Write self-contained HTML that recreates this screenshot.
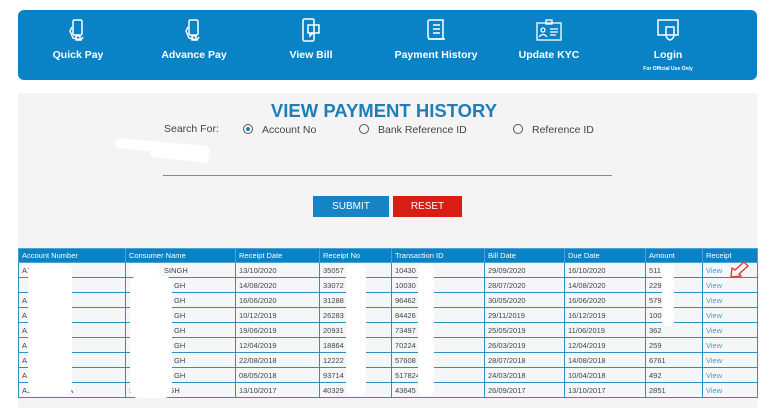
<!DOCTYPE html>
<html><head><meta charset="utf-8"><style>
*{margin:0;padding:0;box-sizing:border-box}
body{width:768px;height:408px;background:#fff;font-family:"Liberation Sans",sans-serif;position:relative;overflow:hidden}
.bar{position:absolute;left:18px;top:10px;width:739px;height:70px;background:#0a83c6;border-radius:6px}
.it{position:absolute;top:0;width:120px;text-align:center;color:#fff}
.it svg{position:absolute;top:8px;left:50%;margin-left:-11px}
.it b{position:absolute;top:39px;left:0;right:0;font-size:10.5px;font-weight:bold}
.it i{position:absolute;top:56px;left:0;right:0;font-size:5px;font-style:normal;font-weight:bold}
.panel{position:absolute;left:18px;top:93px;width:739px;height:315px;background:#f4f4f5}
.title{position:absolute;left:0;width:768px;top:100px;text-align:center;color:#1e7fb8;font-size:18.5px;font-weight:bold}
.t{position:absolute;font-size:10.5px;color:#444}
.rad{position:absolute;width:10px;height:10px;border:1.2px solid #555;border-radius:50%}
.line{position:absolute;left:163px;top:175px;width:449px;height:1px;background:#888}
.btn{position:absolute;top:196px;height:21px;color:#fff;font-size:10px;text-align:center;line-height:21px}
table{position:absolute;left:18px;top:248px;border-collapse:collapse;font-size:7.5px;color:#444}
td,th{border:1px solid #2f8fc4;height:15px;padding:0 3px;text-align:left;font-weight:normal;white-space:nowrap}
th{background:#0a83c6;color:#fff;height:14px;border-color:#4aa3d4}
td{background:#f4f6f8}
td.v{color:#4a9bcc}
td.n{padding-left:48px}
.w{position:absolute;background:#fff}
</style></head><body>
<div class="bar">
<div class="it" style="left:0"><svg width="22" height="26" viewBox="0 0 22 26" fill="none" stroke="#fff" stroke-width="1.5"><rect x="6" y="2" width="9" height="15" rx="1.5"/><path d="M5 9 L3 13 L6 20 L14 22 L16 19"/><rect x="9" y="18" width="4" height="4"/></svg><b>Quick Pay</b></div>
<div class="it" style="left:116px"><svg width="22" height="26" viewBox="0 0 22 26" fill="none" stroke="#fff" stroke-width="1.5"><rect x="6" y="2" width="9" height="15" rx="1.5"/><path d="M5 9 L3 13 L6 20 L14 22 L16 19"/><rect x="9" y="18" width="4" height="4"/></svg><b>Advance Pay</b></div>
<div class="it" style="left:233px"><svg width="22" height="26" viewBox="0 0 22 26" fill="none" stroke="#fff" stroke-width="1.5"><rect x="3" y="1" width="11" height="22" rx="1.5"/><rect x="8" y="7" width="11" height="8"/><path d="M10 15 L10 18 L13 15"/></svg><b>View Bill</b></div>
<div class="it" style="left:358px"><svg width="22" height="26" viewBox="0 0 22 26" fill="none" stroke="#fff" stroke-width="1.5"><path d="M4 2 H18 V21 H6 Q3 21 3 18 V4 Q3 2 5 2"/><path d="M8 7 H15 M8 11 H15 M8 15 H15"/><path d="M3 21 H20"/></svg><b>Payment History</b></div>
<div class="it" style="left:471px"><svg width="26" height="24" viewBox="0 0 26 24" fill="none" stroke="#fff" stroke-width="1.3" style="margin-left:-13px"><rect x="1" y="5" width="24" height="17"/><rect x="10" y="2" width="6" height="4"/><circle cx="7" cy="12" r="2"/><path d="M3 19 Q7 14 11 19"/><path d="M14 11 H22 M14 14 H22 M14 17 H20"/></svg><b>Update KYC</b></div>
<div class="it" style="left:590px"><svg width="24" height="24" viewBox="0 0 24 24" fill="none" stroke="#fff" stroke-width="1.5" style="margin-left:-12px"><rect x="2" y="2" width="20" height="15"/><path d="M10 9 H18 V16 Q18 21 14 22 Q10 21 10 16 Z"/></svg><b>Login</b><i>For Official Use Only</i></div>
</div>
<div class="panel"></div>
<div class="title">VIEW PAYMENT HISTORY</div>
<div class="t" style="left:164px;top:123px">Search For:</div>
<div class="rad" style="left:243px;top:124px"></div><div style="position:absolute;left:246px;top:127px;width:4px;height:4px;border-radius:50%;background:#1e7fb8"></div>
<div class="t" style="left:262px;top:124px">Account No</div>
<div class="rad" style="left:359px;top:124px"></div>
<div class="t" style="left:378px;top:124px">Bank Reference ID</div>
<div class="rad" style="left:513px;top:124px"></div>
<div class="t" style="left:532px;top:124px">Reference ID</div>
<div class="w" style="left:115px;top:142px;width:95px;height:10px;transform:rotate(5deg);border-radius:5px"></div>
<div class="w" style="left:150px;top:152px;width:60px;height:8px;transform:rotate(6deg);border-radius:4px"></div>
<div class="line"></div>
<div class="btn" style="left:313px;width:76px;background:#1683c4">SUBMIT</div>
<div class="btn" style="left:393px;width:69px;background:#d81c16">RESET</div>
<table>
<tr><th style="width:107px">Account Number</th><th style="width:110px">Consumer Name</th><th style="width:84px">Receipt Date</th><th style="width:72px">Receipt No</th><th style="width:93px">Transaction ID</th><th style="width:80px">Bill Date</th><th style="width:81px">Due Date</th><th style="width:57px">Amount</th><th style="width:55px">Receipt</th></tr>
<tr><td>A1</td><td style="padding-left:38px">SINGH</td><td>13/10/2020</td><td>35057</td><td>10430</td><td>29/09/2020</td><td>16/10/2020</td><td>511</td><td class="v">View</td></tr>
<tr><td></td><td class="n">GH</td><td>14/08/2020</td><td>33072</td><td>10030</td><td>28/07/2020</td><td>14/08/2020</td><td>229</td><td class="v">View</td></tr>
<tr><td>A</td><td class="n">GH</td><td>16/06/2020</td><td>31288</td><td>96462</td><td>30/05/2020</td><td>16/06/2020</td><td>5798</td><td class="v">View</td></tr>
<tr><td>A</td><td class="n">GH</td><td>10/12/2019</td><td>26283</td><td>84426</td><td>29/11/2019</td><td>16/12/2019</td><td>1006</td><td class="v">View</td></tr>
<tr><td>A</td><td class="n">GH</td><td>19/06/2019</td><td>20931</td><td>73497</td><td>25/05/2019</td><td>11/06/2019</td><td>362</td><td class="v">View</td></tr>
<tr><td>A</td><td class="n">GH</td><td>12/04/2019</td><td>18864</td><td>70224</td><td>26/03/2019</td><td>12/04/2019</td><td>259</td><td class="v">View</td></tr>
<tr><td>A</td><td class="n">GH</td><td>22/08/2018</td><td>12222</td><td>57608</td><td>28/07/2018</td><td>14/08/2018</td><td>6761</td><td class="v">View</td></tr>
<tr><td>A</td><td class="n">GH</td><td>08/05/2018</td><td>93714</td><td>517824</td><td>24/03/2018</td><td>10/04/2018</td><td>492</td><td class="v">View</td></tr>
<tr><td>A1&nbsp;&nbsp;&nbsp;&nbsp;&nbsp;&nbsp;&nbsp;&nbsp;&nbsp;&nbsp;&nbsp;&nbsp;&nbsp;&nbsp;&nbsp;&nbsp;JA</td><td>S&nbsp;&nbsp;&nbsp;&nbsp;&nbsp;&nbsp;&nbsp;&nbsp;&nbsp;&nbsp;&nbsp;&nbsp;&nbsp;&nbsp;NGH</td><td>13/10/2017</td><td>40329</td><td>43645</td><td>26/09/2017</td><td>13/10/2017</td><td>2851</td><td class="v">View</td></tr>
</table>
<div class="w" style="left:28px;top:264px;width:44px;height:132px;border-radius:8px"></div>
<div class="w" style="left:130px;top:263px;width:30px;height:15px;border-radius:6px"></div>
<div class="w" style="left:130px;top:276px;width:42px;height:122px;border-radius:8px"></div>
<div class="w" style="left:346px;top:264px;width:20px;height:132px;border-radius:6px"></div>
<div class="w" style="left:418px;top:264px;width:16px;height:132px;border-radius:6px"></div>
<div class="w" style="left:662px;top:264px;width:12px;height:62px"></div>
<svg style="position:absolute;left:728px;top:260px" width="24" height="20" viewBox="0 0 24 20" fill="none" stroke="#d4382e" stroke-width="1.3"><path d="M3 17 L4 8 L7 10 L16 2 L20 6 L11 14 L13 16 Z"/></svg>
</body></html>
